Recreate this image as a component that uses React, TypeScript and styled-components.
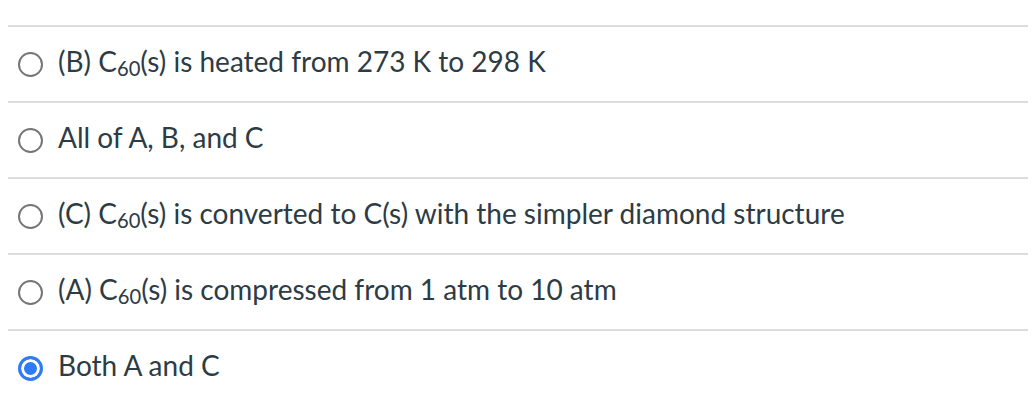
import styled, { createGlobalStyle } from "styled-components";

const GlobalStyle = createGlobalStyle`
  body {
    margin: 0;
    background: #ffffff;
    font-family: Lato, "Open Sans", sans-serif;
  }
`;

interface Answer {
  id: string;
  label: React.ReactNode;
  selected?: boolean;
}

const C60 = () => (
  <>
    C<Sub>60</Sub>(s)
  </>
);

const answers: Answer[] = [
  { id: "b", label: <>(B) <C60 /> is heated from 273 K to 298 K</> },
  { id: "all", label: "All of A, B, and C" },
  {
    id: "c",
    label: <>(C) <C60 /> is converted to C(s) with the simpler diamond structure</>,
  },
  { id: "a", label: <>(A) <C60 /> is compressed from 1 atm to 10 atm</> },
  { id: "ac", label: "Both A and C", selected: true },
];

const App = () => {
  return (
    <>
      <GlobalStyle />
      <AnswerList>
        {answers.map((answer) => (
          <AnswerRow key={answer.id}>
            <Radio $selected={!!answer.selected} />
            <AnswerText>{answer.label}</AnswerText>
          </AnswerRow>
        ))}
      </AnswerList>
    </>
  );
};

export default App;

const AnswerList = styled.div`
  display: flex;
  flex-direction: column;
  padding: 25px 8px 0;
`;

const AnswerRow = styled.div`
  display: flex;
  align-items: center;
  gap: 15px;
  height: 74px;
  padding-left: 10px;
  border-top: 2px solid #dcdcdc;
`;

const Radio = styled.span<{ $selected: boolean }>`
  box-sizing: border-box;
  flex: none;
  width: 25px;
  height: 25px;
  border-radius: 50%;
  border: ${({ $selected }) => ($selected ? "3px solid #2f7bf6" : "2px solid #767676")};
  background: ${({ $selected }) => ($selected ? "#2f7bf6" : "#ffffff")};
  box-shadow: ${({ $selected }) => ($selected ? "inset 0 0 0 3px #ffffff" : "none")};
`;

const AnswerText = styled.span`
  font-size: 28px;
  line-height: 34px;
  color: #2d3b45;
  margin-top: -6px;
`;

const Sub = styled.sub`
  font-size: 0.72em;
  vertical-align: -0.22em;
  line-height: 0;
`;
